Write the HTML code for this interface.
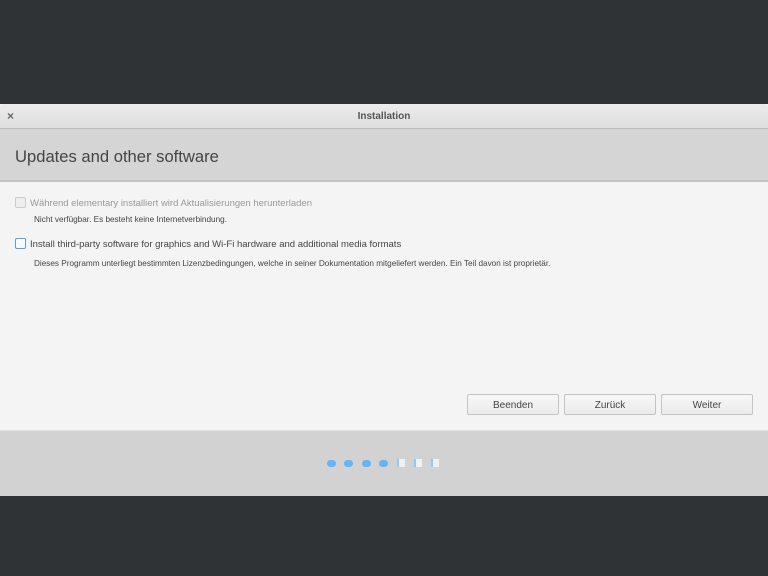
<!DOCTYPE html>
<html><head><style>
body{margin:0;width:768px;height:576px;background:#2f3336;font-family:"Liberation Sans",sans-serif;position:relative;overflow:hidden}
.win{position:absolute;left:0;top:104px;width:768px;height:391px;background:#f4f4f4}
.tb{position:absolute;left:0;top:0;width:768px;height:24px;background:linear-gradient(#ececec,#dedede);border-bottom:1px solid #bcbcbc;border-radius:3px 3px 0 0}
.tb .t{position:absolute;left:0;right:0;top:7px;text-align:center;font-size:10px;font-weight:bold;color:#555}
.tb .x{position:absolute;left:7px;top:5px;font-size:12px;font-weight:bold;color:#666}
.hd{position:absolute;top:25px;left:0;width:768px;height:51px;background:#d5d5d5;border-bottom:2px solid #c2c2c2}
.hd div{position:absolute;left:15px;top:18px;font-size:16.6px;color:#444}
.cb{position:absolute;width:9px;height:9px;border:1px solid #ccc;border-radius:2px;background:#eee}
.l{position:absolute;font-size:9.5px;color:#444;white-space:nowrap}
.s{position:absolute;font-size:8.2px;color:#444;white-space:nowrap}
.btn{position:absolute;top:290px;width:90px;height:19px;border:1px solid #c4c4c4;border-radius:2px;background:linear-gradient(#f7f7f7,#ebebeb);font-size:10px;color:#444;text-align:center;line-height:21px}
.ft{position:absolute;left:0;top:326px;width:768px;height:65px;background:#d2d2d2;border-top:1px solid #e0e0e0}
.d{position:absolute;top:29px;width:9px;height:7px;border-radius:4px;background:#64b4f6}
.q{position:absolute;top:28px;width:8px;height:8px;background:#f0f0f0;border-left:2px solid #8cc8f8;box-sizing:border-box}
</style></head><body>
<div class="win">
<div class="tb"><span class="x">×</span><div class="t">Installation</div></div>
<div class="hd"><div>Updates and other software</div></div>
<div class="cb" style="left:15px;top:93px"></div>
<div class="l" style="left:30px;top:94px;color:#999">Während elementary installiert wird Aktualisierungen herunterladen</div>
<div class="s" style="left:34px;top:111px">Nicht verfügbar. Es besteht keine Internetverbindung.</div>
<div class="cb" style="left:15px;top:134px;border-color:#5a9fd8;background:#fafafa"></div>
<div class="l" style="left:30px;top:135px">Install third-party software for graphics and Wi-Fi hardware and additional media formats</div>
<div class="s" style="left:34px;top:155px">Dieses Programm unterliegt bestimmten Lizenzbedingungen, welche in seiner Dokumentation mitgeliefert werden. Ein Teil davon ist proprietär.</div>
<div class="btn" style="left:467px">Beenden</div>
<div class="btn" style="left:564px">Zurück</div>
<div class="btn" style="left:661px">Weiter</div>
<div class="ft">
<div class="d" style="left:327px"></div><div class="d" style="left:344px"></div><div class="d" style="left:362px"></div><div class="d" style="left:379px"></div>
<div class="q" style="left:397px"></div><div class="q" style="left:414px"></div><div class="q" style="left:431px"></div>
</div>
</div>
</body></html>
